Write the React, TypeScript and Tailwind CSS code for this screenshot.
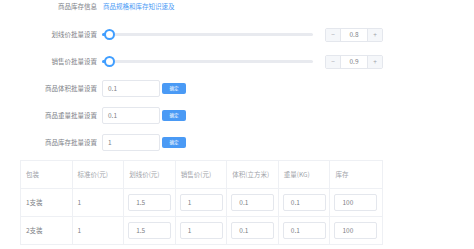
const font = { fontFamily: '"Noto Sans CJK SC", "Liberation Sans", sans-serif' };

function Label({ children }: { children: React.ReactNode }) {
  return <div className="w-[97px] shrink-0 text-right text-[6.5px] text-[#7d8086]">{children}</div>;
}

function SliderRow({ label, value }: { label: string; value: string }) {
  return (
    <div className="flex items-center h-[17px]">
      <Label>{label}</Label>
      <div className="relative ml-[5px] w-[211px] h-[3px] rounded-full bg-[#e8eaef]">
        <div className="absolute left-0 top-0 h-[3px] w-[7px] rounded-full bg-[#409eff]" />
        <div className="absolute left-[2px] top-[-4px] w-[11px] h-[11px] rounded-full border-2 border-[#409eff] bg-white" />
      </div>
      <div className="ml-[12px] flex h-[14px] w-[58px] border border-[#e4e7ed] rounded-[2px] text-[6.5px] text-[#7d8086]">
        <div className="w-[15px] flex items-center justify-center bg-[#f5f7fa] border-r border-[#e4e7ed] text-[#a0a3a9]">−</div>
        <div className="flex-1 flex items-center justify-center">{value}</div>
        <div className="w-[15px] flex items-center justify-center bg-[#f5f7fa] border-l border-[#e4e7ed] text-[#a0a3a9]">+</div>
      </div>
    </div>
  );
}

function InputRow({ label, value }: { label: string; value: string }) {
  return (
    <div className="flex items-center h-[17px]">
      <Label>{label}</Label>
      <div className="ml-[5px] w-[58px] h-[17px] border border-[#e4e7ed] rounded-[2px] flex items-center pl-[5px] text-[6.5px] text-[#7d8086]">
        {value}
      </div>
      <button className="ml-[2px] w-[24px] h-[11px] rounded-[2px] bg-[#4a9af5] text-white text-[4.5px] flex items-center justify-center">
        确定
      </button>
    </div>
  );
}

function CellInput({ value }: { value: string }) {
  return (
    <div className="w-[43px] h-[17px] border border-[#e4e7ed] rounded-[2px] flex items-center pl-[7px] text-[6.5px] text-[#7d8086]">
      {value}
    </div>
  );
}

export default function App() {
  const headers = ['包装', '标准价(元)', '划线价(元)', '销售价(元)', '体积(立方米)', '重量(KG)', '库存'];
  const rows = [
    ['1支装', '1', '1.5', '1', '0.1', '0.1', '100'],
    ['2支装', '1', '1.5', '1', '0.1', '0.1', '100'],
  ];
  return (
    <div className="w-[474px] h-[249px] bg-white overflow-hidden" style={font}>
      <div className="flex items-center h-[14px]">
        <Label>商品库存信息</Label>
        <span className="ml-[6px] text-[6.5px] text-[#4a9af5]">商品规格和库存知识速及</span>
      </div>
      <div className="mt-[12px] flex flex-col gap-[10px]">
        <SliderRow label="划线价批量设置" value="0.8" />
        <SliderRow label="销售价批量设置" value="0.9" />
        <InputRow label="商品体积批量设置" value="0.1" />
        <InputRow label="商品重量批量设置" value="0.1" />
        <InputRow label="商品库存批量设置" value="1" />
      </div>
      <div className="ml-[20px] mt-[9px] w-[363px] border border-[#eef0f4] text-[6.5px] text-[#a0a3a9]">
        <div className="grid grid-cols-7 h-[27px]">
          {headers.map((h, i) => (
            <div key={h} className={`flex items-center pl-[5px] ${i < 6 ? 'border-r border-[#eef0f4]' : ''}`}>{h}</div>
          ))}
        </div>
        {rows.map((r, ri) => (
          <div key={ri} className="grid grid-cols-7 h-[28px] border-t border-[#eef0f4] text-[#7d8086]">
            {r.map((c, i) => (
              <div key={i} className={`flex items-center ${i < 2 ? 'pl-[5px]' : 'pl-[4px]'} ${i < 6 ? 'border-r border-[#eef0f4]' : ''}`}>
                {i < 2 ? c : <CellInput value={c} />}
              </div>
            ))}
          </div>
        ))}
      </div>
    </div>
  );
}
